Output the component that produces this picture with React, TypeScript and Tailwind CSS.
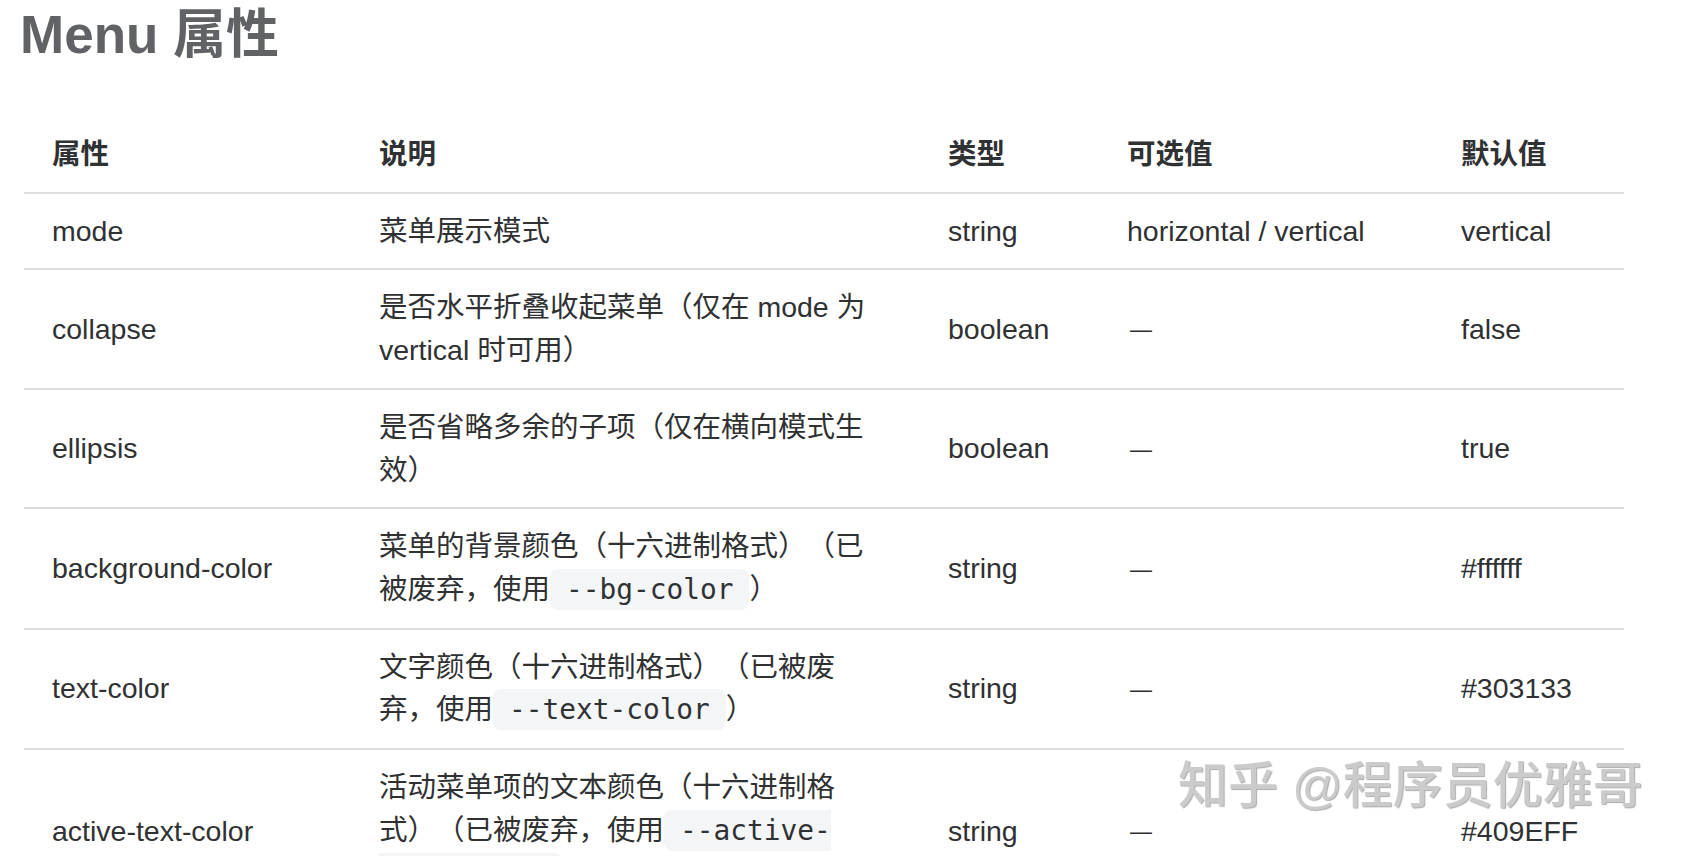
import React from "react";

const FONT = "font-['Liberation_Sans','Noto_Sans_CJK_SC',sans-serif]";

function Code({ children }: { children: React.ReactNode }) {
  return (
    <code className="rounded-[8px] bg-[#f4f5f7] px-[16px] py-[4px] font-['DejaVu_Sans_Mono','Liberation_Mono',monospace] text-[27.8px] text-[#303133]">
      {children}
    </code>
  );
}

function Dash() {
  return <span className="pl-[3px] text-[22px]">—</span>;
}

type Row = {
  name: string;
  desc: React.ReactNode;
  type: string;
  options: React.ReactNode;
  def: string;
};

const rows: Row[] = [
  { name: "mode", desc: "菜单展示模式", type: "string", options: "horizontal / vertical", def: "vertical" },
  { name: "collapse", desc: "是否水平折叠收起菜单（仅在 mode 为 vertical 时可用）", type: "boolean", options: <Dash />, def: "false" },
  { name: "ellipsis", desc: "是否省略多余的子项（仅在横向模式生效）", type: "boolean", options: <Dash />, def: "true" },
  {
    name: "background-color",
    desc: (
      <>
        菜单的背景颜色（十六进制格式）（已被废弃，使用<Code>--bg-color</Code>）
      </>
    ),
    type: "string",
    options: <Dash />,
    def: "#ffffff",
  },
  {
    name: "text-color",
    desc: (
      <>
        文字颜色（十六进制格式）（已被废弃，使用<Code>--text-color</Code>）
      </>
    ),
    type: "string",
    options: <Dash />,
    def: "#303133",
  },
  {
    name: "active-text-color",
    desc: (
      <>
        活动菜单项的文本颜色（十六进制格式）（已被废弃，使用<Code>--active-text-color</Code>）
      </>
    ),
    type: "string",
    options: <Dash />,
    def: "#409EFF",
  },
];

export default function App() {
  const th = "text-left align-middle py-[16px] pl-[28px] font-bold text-[#303133]";
  const td = "align-middle py-[16px] pl-[28px] text-[#303133]";
  return (
    <div className={`relative h-[856px] w-[1684px] overflow-hidden bg-white [text-spacing-trim:space-all] ${FONT}`}>
      <h1 className="pl-[20px] pt-[6px] text-[53px] font-bold leading-[58px] text-[#606266]">Menu 属性</h1>
      <table className="ml-[24px] mt-[53px] w-[1600px] table-fixed border-collapse text-[28.5px] leading-[42.7px]">
        <colgroup>
          <col className="w-[327px]" />
          <col className="w-[569px]" />
          <col className="w-[179px]" />
          <col className="w-[334px]" />
          <col className="w-[191px]" />
        </colgroup>
        <thead>
          <tr className="border-b-2 border-[#dedede]">
            <th className={th}>属性</th>
            <th className={th}>说明</th>
            <th className={th}>类型</th>
            <th className={th}>可选值</th>
            <th className={th}>默认值</th>
          </tr>
        </thead>
        <tbody>
          {rows.map((r) => (
            <tr key={r.name} className="border-b-2 border-[#dedede]">
              <td className={td}>{r.name}</td>
              <td className={`${td} pr-[40px]`}>{r.desc}</td>
              <td className={td}>{r.type}</td>
              <td className={td}>{r.options}</td>
              <td className={td}>{r.def}</td>
            </tr>
          ))}
        </tbody>
      </table>
      <span className="absolute left-[1178px] top-[756px] whitespace-nowrap text-[50px] font-medium leading-[60px] text-[#cbcbcb] [text-shadow:1px_1px_1px_rgba(90,90,90,0.5)]">
        知乎 @程序员优雅哥
      </span>
    </div>
  );
}
